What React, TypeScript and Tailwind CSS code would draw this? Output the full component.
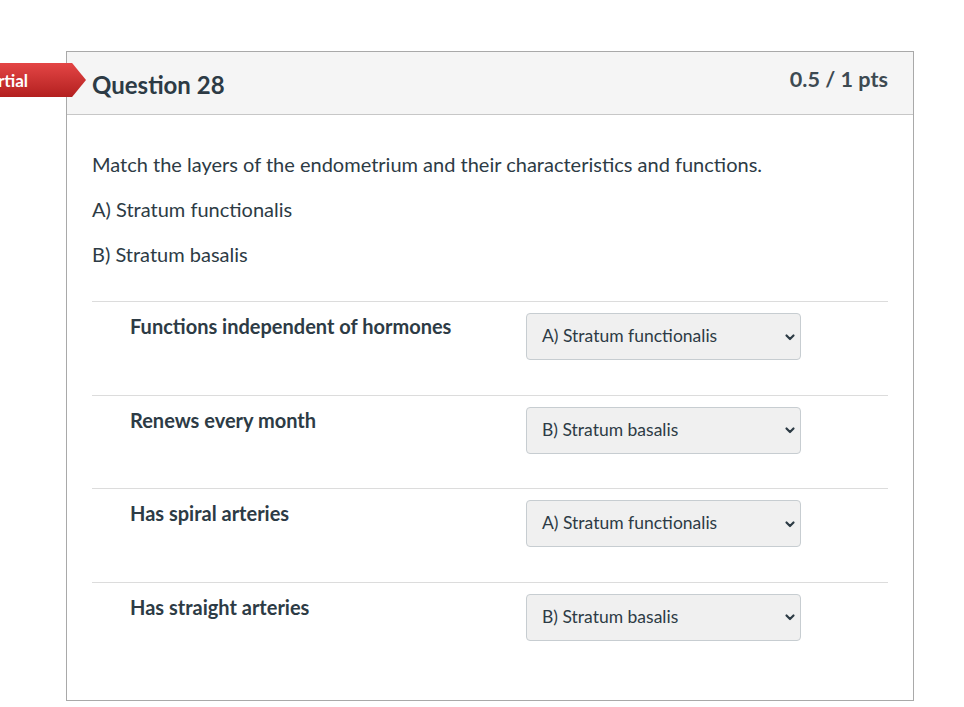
const ROWS = [
  { label: 'Functions independent of hormones', answer: 'A) Stratum functionalis' },
  { label: 'Renews every month', answer: 'B) Stratum basalis' },
  { label: 'Has spiral arteries', answer: 'A) Stratum functionalis' },
  { label: 'Has straight arteries', answer: 'B) Stratum basalis' },
]

function Chevron() {
  return (
    <svg className="w-[12px] h-[12px] text-[#2d3b45]" viewBox="0 0 12 12" fill="none" stroke="currentColor" strokeWidth={2.2} strokeLinecap="round" strokeLinejoin="round">
      <path d="M2.5 4.5L6 8l3.5-3.5" />
    </svg>
  )
}

export default function App() {
  return (
    <div className="relative w-[964px] h-[707px] overflow-hidden bg-white text-[#2d3b45] font-['Lato','Noto_Sans',sans-serif]">
      {/* partial badge */}
      <div className="absolute left-[-21px] top-[63px] z-10 h-[34px] w-[107px] bg-gradient-to-b from-[#e44545] to-[#b31f1f] [clip-path:polygon(0_0,87%_0,100%_50%,87%_100%,0_100%)] flex items-center text-white font-bold text-[17px] leading-none">
        Partial
      </div>

      <div className="ml-[66px] mt-[51px] w-[848px] h-[650px] border border-[#a9a9a9] flex flex-col">
        <div className="h-[63px] shrink-0 bg-[#f5f5f5] border-b border-[#c7c7c7] flex justify-between pl-[25px] pr-[25px]">
          <h2 className="pt-[17px] text-[24px] font-bold leading-[32px]">Question 28</h2>
          <div className="pt-[13px] text-[21.6px] font-bold leading-[28px] text-[#3d4a52]">0.5 / 1 pts</div>
        </div>

        <div className="px-[25px] pt-[35px]">
          <p className="text-[20px] leading-[28px]">Match the layers of the endometrium and their characteristics and functions.</p>
          <p className="mt-[17px] text-[20px] leading-[28px]">A) Stratum functionalis</p>
          <p className="mt-[17px] text-[20px] leading-[28px]">B) Stratum basalis</p>

          <div className="mt-[33px]">
            {ROWS.map(r => (
              <div key={r.label} className="border-t border-[#dcdcdc] pt-[11px] pb-[34.5px] flex items-start">
                <div className="w-[434px] pl-[38px] text-[20px] font-bold leading-[26px]">{r.label}</div>
                <div className="w-[275px] h-[47px] rounded-[4px] border border-[#c7cdd1] bg-[#f0f0f0] flex items-center justify-between pl-[15px] pr-[4px] text-[17.5px]">
                  <span>{r.answer}</span>
                  <Chevron />
                </div>
              </div>
            ))}
          </div>
        </div>
      </div>
    </div>
  )
}
